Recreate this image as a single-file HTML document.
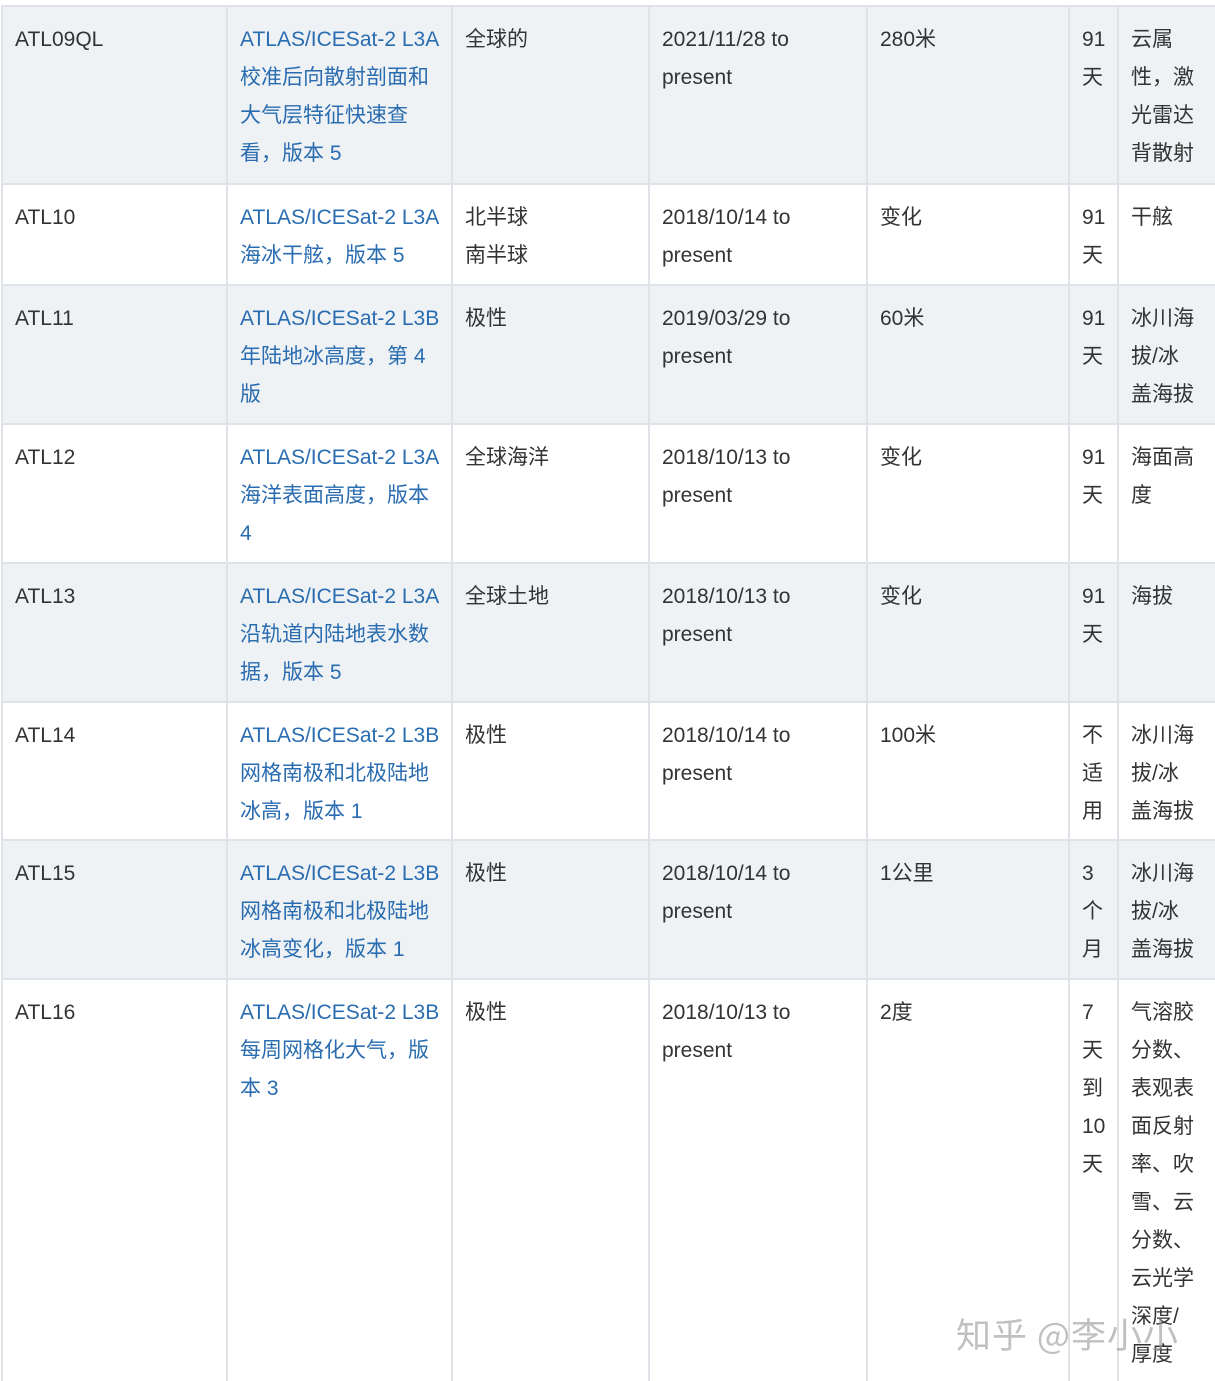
<!DOCTYPE html>
<html><head><meta charset="utf-8"><style>
html,body{margin:0;background:#fff;width:1215px;height:1381px;overflow:hidden;}
body{position:relative;font-family:"Liberation Sans","Noto Sans CJK SC",sans-serif;}
table{position:absolute;left:1px;top:5px;border-collapse:collapse;table-layout:fixed;width:1320px;}
td{border:2px solid #dfe3e7;vertical-align:top;padding:14px 0 0 12px;font-size:21px;line-height:38px;color:#333;white-space:nowrap;overflow:hidden;box-sizing:border-box;}
tr.g td{background:#eef2f5;}
a{color:#2a6cb0;text-decoration:none;}
.wm{position:absolute;left:956px;top:1308px;font-size:35px;color:rgba(150,150,150,0.6);font-family:"Noto Sans CJK SC",sans-serif;letter-spacing:1px;}
</style></head><body>
<table>
<colgroup><col style="width:225px"><col style="width:225px"><col style="width:197px"><col style="width:218px"><col style="width:202px"><col style="width:49px"><col style="width:204px"></colgroup>
<tr class="g" style="height:178px"><td>ATL09QL</td><td><a>ATLAS/ICESat-2 L3A<br>校准后向散射剖面和<br>大气层特征快速查<br>看，版本 5</a></td><td>全球的</td><td>2021/11/28 to<br>present</td><td>280米</td><td>91<br>天</td><td>云属<br>性，激<br>光雷达<br>背散射</td></tr>
<tr style="height:101px"><td>ATL10</td><td><a>ATLAS/ICESat-2 L3A<br>海冰干舷，版本 5</a></td><td>北半球<br>南半球</td><td>2018/10/14 to<br>present</td><td>变化</td><td>91<br>天</td><td>干舷</td></tr>
<tr class="g" style="height:139px"><td>ATL11</td><td><a>ATLAS/ICESat-2 L3B<br>年陆地冰高度，第 4<br>版</a></td><td>极性</td><td>2019/03/29 to<br>present</td><td>60米</td><td>91<br>天</td><td>冰川海<br>拔/冰<br>盖海拔</td></tr>
<tr style="height:139px"><td>ATL12</td><td><a>ATLAS/ICESat-2 L3A<br>海洋表面高度，版本<br>4</a></td><td>全球海洋</td><td>2018/10/13 to<br>present</td><td>变化</td><td>91<br>天</td><td>海面高<br>度</td></tr>
<tr class="g" style="height:139px"><td>ATL13</td><td><a>ATLAS/ICESat-2 L3A<br>沿轨道内陆地表水数<br>据，版本 5</a></td><td>全球土地</td><td>2018/10/13 to<br>present</td><td>变化</td><td>91<br>天</td><td>海拔</td></tr>
<tr style="height:138px"><td>ATL14</td><td><a>ATLAS/ICESat-2 L3B<br>网格南极和北极陆地<br>冰高，版本 1</a></td><td>极性</td><td>2018/10/14 to<br>present</td><td>100米</td><td>不<br>适<br>用</td><td>冰川海<br>拔/冰<br>盖海拔</td></tr>
<tr class="g" style="height:139px"><td>ATL15</td><td><a>ATLAS/ICESat-2 L3B<br>网格南极和北极陆地<br>冰高变化，版本 1</a></td><td>极性</td><td>2018/10/14 to<br>present</td><td>1公里</td><td>3<br>个<br>月</td><td>冰川海<br>拔/冰<br>盖海拔</td></tr>
<tr style="height:410px"><td>ATL16</td><td><a>ATLAS/ICESat-2 L3B<br>每周网格化大气，版<br>本 3</a></td><td>极性</td><td>2018/10/13 to<br>present</td><td>2度</td><td>7<br>天<br>到<br>10<br>天</td><td>气溶胶<br>分数、<br>表观表<br>面反射<br>率、吹<br>雪、云<br>分数、<br>云光学<br>深度/<br>厚度</td></tr>
</table>
<div class="wm">知乎 @李小小</div>
</body></html>
